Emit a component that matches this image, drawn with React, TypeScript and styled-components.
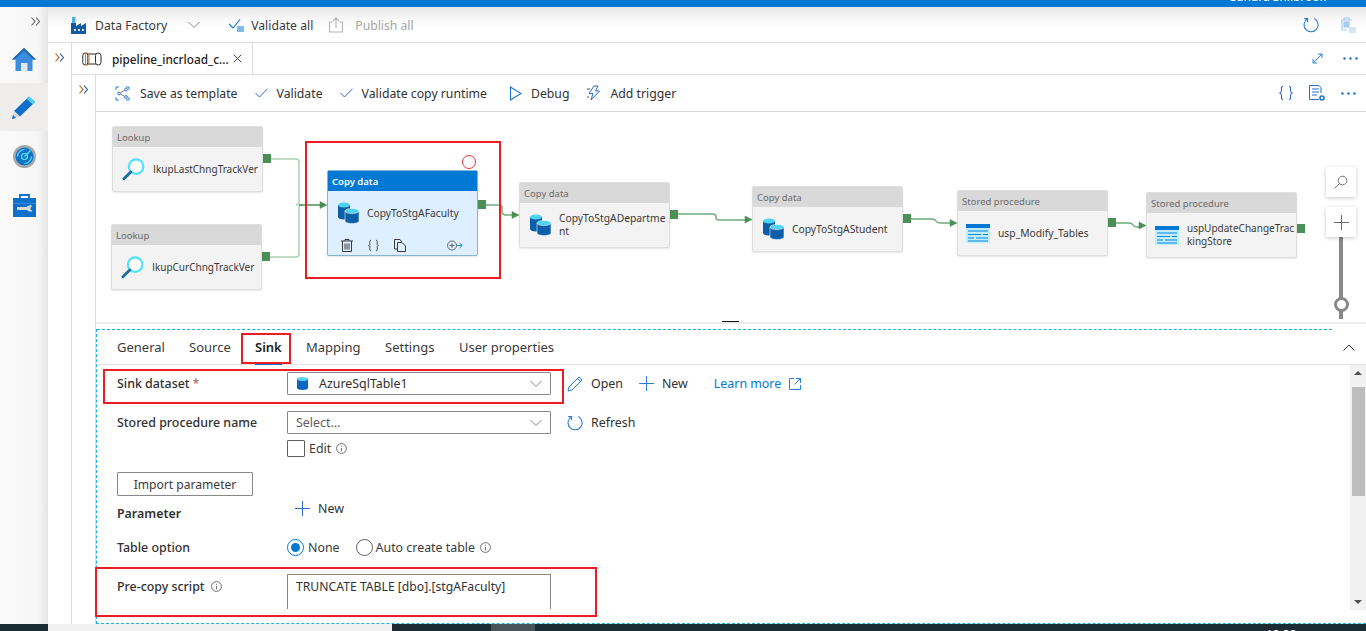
import React from 'react';
import styled, { createGlobalStyle } from 'styled-components';

const Global = createGlobalStyle`
  html, body { margin: 0; padding: 0; background: #fff; }
  body { font-family: "Noto Sans", "Open Sans", sans-serif; color: #323130; overflow: hidden; }
  * { box-sizing: border-box; }
`;

const Page = styled.div`
  width: 1366px; height: 631px; display: flex; flex-direction: column; overflow: hidden; position: relative;
`;
const TopBar = styled.div`
  height: 7px; flex: none; background: #0078d4; display: flex; justify-content: flex-end; overflow: hidden; padding-right: 40px;
`;
const Account = styled.span`
  color: #fff; font-size: 12px; line-height: 12px; margin-top: -9px;
`;
const Main = styled.div`
  flex: 1; min-height: 0; display: flex;
`;
const Rail = styled.nav`
  width: 48px; flex: none; display: flex; flex-direction: column; align-items: stretch;
  background: linear-gradient(90deg, #fafafa 0, #f6f6f6 80%, #e4e4e4 100%);
`;
const RailExpand = styled.div`
  height: 29px; display: flex; justify-content: flex-end; align-items: center; padding: 0 7px 0 0;
`;
const RailItem = styled.div<{ $active?: boolean; $h: number }>`
  height: ${p => p.$h}px; display: flex; align-items: center; justify-content: center;
  background: ${p => (p.$active ? '#eeedeb' : 'transparent')};
`;
const Content = styled.div`
  flex: 1; min-width: 0; display: flex; flex-direction: column;
`;
const FactoryBar = styled.header`
  height: 36px; flex: none; display: flex; align-items: center; padding: 1px 10px 0 23px;
  border-bottom: 1px solid #dcdcdc; font-size: 12.2px;
  background: linear-gradient(180deg, #e6e6e6 0, #f8f8f8 35%, #fff 60%);
`;
const BarLabel = styled.span<{ $off?: boolean; $ml?: number }>`
  display: flex; align-items: center;
  color: ${p => (p.$off ? '#a6a6a6' : '#3b3a39')}; margin-left: ${p => p.$ml ?? 0}px; white-space: nowrap;
`;
const Spacer = styled.div`flex: 1;`;
const Work = styled.div`
  flex: 1; min-height: 0; display: flex;
`;
const SideCol = styled.div`
  width: 24px; flex: none; border-right: 1px solid #dcdcdc; background: #fff; display: flex; justify-content: center;
  padding-top: 9px;
`;
const Column = styled.div`
  flex: 1; min-width: 0; display: flex; flex-direction: column;
`;
const TabStrip = styled.div`
  height: 32px; flex: none; display: flex; border-bottom: 1px solid #dcdcdc; align-items: stretch; padding-right: 8px;
`;
const DocTab = styled.div`
  width: 181px; border-right: 1px solid #dcdcdc; display: flex; align-items: center; padding-left: 10px;
  font-size: 11.8px; font-weight: 500; color: #252423;
`;
const TabName = styled.span`
  margin-left: 10px; width: 121px; white-space: nowrap;
`;
const TabTools = styled.div`
  margin-left: auto; display: flex; align-items: center; gap: 20px;
`;
const Toolbar = styled.div`
  height: 37px; flex: none; border-bottom: 1px solid #dcdcdc; display: flex; align-items: center; padding: 0 10px 0 19px;
  gap: 17px; font-size: 12.25px;
`;
const Tool = styled.div<{ $gap?: number; $ml?: number }>`
  display: flex; align-items: center; gap: ${p => p.$gap ?? 9}px; margin-left: ${p => p.$ml ?? 0}px; color: #323130; white-space: nowrap;
`;
const ToolIcons = styled.div`
  margin-left: auto; display: flex; align-items: center; gap: 15px;
`;
const Canvas = styled.div`
  height: 212px; flex: none; position: relative; border-bottom: 2px solid #ececec; overflow: hidden;
`;
const Wires = styled.svg`
  position: absolute; left: 0; top: 0; pointer-events: none;
`;
const Node = styled.div<{ $x: number; $y: number; $sel?: boolean }>`
  position: absolute; left: ${p => p.$x}px; top: ${p => p.$y}px; width: 151px; height: ${p => (p.$sel ? 86 : 66)}px;
  border: 1px solid ${p => (p.$sel ? '#84b4d8' : '#dedede')}; border-radius: 2px;
  background: ${p => (p.$sel ? '#deefff' : '#f3f3f3')};
  box-shadow: 0 1px 2px rgba(0,0,0,.1);
`;
const NodeHead = styled.div<{ $sel?: boolean }>`
  height: 20px; padding-left: 4px; font-size: 9.5px; line-height: 21px;
  background: ${p => (p.$sel ? '#0078d4' : '#d9d9d9')}; color: ${p => (p.$sel ? '#fff' : '#6a6a6a')};
  font-weight: ${p => (p.$sel ? 600 : 400)};
`;
const NodeBody = styled.div<{ $pad: number }>`
  height: 44px; display: flex; align-items: center; padding-left: ${p => p.$pad}px; gap: 8px;
`;
const NodeText = styled.div<{ $w: number; $fs?: number }>`
  width: ${p => p.$w}px; font-size: ${p => p.$fs ?? 10.3}px; line-height: 13px; color: #3b3a39; word-break: break-all;
`;
const Port = styled.div<{ $x: number; $y: number }>`
  position: absolute; left: ${p => p.$x}px; top: ${p => p.$y}px; width: 8px; height: 9px; background: #4b8f56;
`;
const NodeActions = styled.div`
  display: flex; align-items: center; height: 22px; padding-left: 13px; gap: 14px; margin-top: -1px;
`;
const RedRing = styled.div`
  position: absolute; left: 366px; top: 43px; width: 14px; height: 14px; border: 1px solid #e8333a; border-radius: 50%; background: #fff;
`;
const ZoomButton = styled.div<{ $y: number }>`
  position: absolute; left: 1230px; top: ${p => p.$y}px; width: 30px; height: 30px; background: #fff;
  box-shadow: 0 1px 4px rgba(0,0,0,.22); display: flex; align-items: center; justify-content: center;
`;
const ZoomTrack = styled.div`
  position: absolute; left: 1243px; top: 125px; width: 4px; height: 82px; background: #888;
`;
const ZoomKnob = styled.div`
  position: absolute; left: 1238px; top: 185px; width: 15px; height: 15px; border-radius: 50%; background: #fff; border: 3px solid #888;
`;
const Handle = styled.div`
  position: absolute; left: 626px; bottom: -1px; width: 17px; height: 2px; background: #111;
`;
const Props = styled.section`
  flex: 1; min-height: 0; margin-top: 5px; position: relative; display: flex; flex-direction: column;
  border-left: 1px dashed #12b4de; border-bottom: 1px dashed #12b4de;
`;
const DashTop = styled.div`
  height: 0; flex: none; border-top: 1px dashed #12b4de; margin-right: 34px;
`;
const PropTabs = styled.div`
  height: 35px; flex: none; display: flex; align-items: center; padding-left: 20px; border-bottom: 1px solid #e1e1e1; font-size: 13px; position: relative;
`;
const PropTab = styled.div<{ $active?: boolean; $w: number }>`
  width: ${p => p.$w}px; white-space: nowrap; color: ${p => (p.$active ? '#201f1e' : '#3b3a39')};
  font-weight: ${p => (p.$active ? 600 : 400)}; position: relative; line-height: 34px; height: 34px;
  ${p => p.$active ? `&::after { content: ""; position: absolute; left: 0; bottom: -1px; width: 27px; height: 2px; background: #0078d4; }` : ''}
`;
const Collapse = styled.div`
  margin-left: auto; width: 34px; display: flex; justify-content: center;
`;
const PropBody = styled.div`
  flex: 1; min-height: 0; display: flex; overflow: hidden;
`;
const Form = styled.div`
  flex: 1; min-width: 0; padding: 7px 0 0 20px; font-size: 12.4px; display: flex; flex-direction: column;
`;
const Row = styled.div<{ $h: number; $mb?: number }>`
  display: flex; align-items: center; height: ${p => p.$h}px; margin-bottom: ${p => p.$mb ?? 0}px; flex: none;
`;
const Label = styled.div<{ $strong?: boolean }>`
  width: 170px; flex: none; display: flex; align-items: center; gap: 6px; color: #323130; white-space: nowrap;
  font-weight: ${p => (p.$strong ? 600 : 500)};
`;
const Star = styled.span`color: #a86a6d; margin-left: -3px;`;
const Select = styled.div`
  width: 264px; height: 23px; flex: none; border: 1px solid #8a8886; border-radius: 1px; display: flex; align-items: center; padding: 0 8px 0 9px; gap: 11px; color: #323130;
`;
const Placeholder = styled.span`color: #605e5c; margin-left: -1px;`;
const Chevron = styled.span`margin-left: auto; display: flex;`;
const Action = styled.div<{ $ml: number; $link?: boolean; $raise?: number }>`
  margin-left: ${p => p.$ml}px; margin-bottom: ${p => p.$raise ?? 0}px; display: flex; align-items: center; gap: 8px; white-space: nowrap; color: ${p => (p.$link ? '#0078d4' : '#323130')};
`;
const Indent = styled.div`
  width: 170px; flex: none;
`;
const Check = styled.div`
  width: 18px; height: 17px; border: 1px solid #605e5c; border-radius: 1px; flex: none;
`;
const Inline = styled.span<{ $ml: number }>`
  margin-left: ${p => p.$ml}px; color: #3b3a39; white-space: nowrap; display: inline-flex; align-items: center; gap: 5px;
`;
const Button = styled.div`
  width: 136px; height: 24px; border: 1px solid #8a8886; border-radius: 1px; display: flex; align-items: center; justify-content: center; color: #3b3a39; font-size: 12.1px;
`;
const Radio = styled.div<{ $on?: boolean; $ml?: number }>`
  width: 17px; height: 17px; border-radius: 50%; flex: none; margin-left: ${p => p.$ml ?? 0}px; position: relative;
  border: 1px solid ${p => (p.$on ? '#0078d4' : '#605e5c')};
  ${p => p.$on ? `&::after { content: ""; position: absolute; left: 3px; top: 3px; width: 9px; height: 9px; border-radius: 50%; background: #0078d4; }` : ''}
`;
const ScriptRow = styled.div`
  display: flex; height: 35px; flex: none;
`;
const ScriptLabel = styled(Label)`
  height: 24px;
`;
const ScriptBox = styled.div`
  width: 264px; height: 35px; border: 1px solid #8a8886; border-bottom: none; padding: 3px 8px; line-height: 18px; color: #323130; white-space: nowrap; border-radius: 1px 1px 0 0; font-size: 12.2px;
`;
const Scrollbar = styled.div`
  width: 16px; height: 245px; flex: none; background: #f1f1f1; display: flex; flex-direction: column; align-items: center; justify-content: space-between; position: relative; padding: 6px 0;
`;
const Thumb = styled.div`
  position: absolute; left: 2px; top: 22px; width: 13px; height: 109px; background: #bdbdbd;
`;
const Footer = styled.div`
  height: 7px; flex: none; background: #1b2b33; position: relative; overflow: hidden;
`;
const FootLight = styled.div`
  position: absolute; left: 48px; top: 0; width: 344px; height: 7px; background: #f0f0f0;
`;
const FootPatch = styled.div`
  position: absolute; left: 491px; top: 0; width: 44px; height: 7px; background: #47555a;
`;
const FootClock = styled.span`
  position: absolute; left: 1266px; top: 5px; color: #fff; font-size: 12px; line-height: 12px;
`;
const Annot = styled.div<{ $x: number; $y: number; $w: number; $h: number }>`
  position: absolute; left: ${p => p.$x}px; top: ${p => p.$y}px; width: ${p => p.$w}px; height: ${p => p.$h}px;
  border: 2px solid #ed1c24; pointer-events: none;
`;

type S = { c?: string; s?: number };
const Dbl = ({ c = '#605e5c', s = 11 }: S) => (
  <svg width={s} height={s} viewBox="0 0 11 11" fill="none" stroke={c} strokeWidth="1.1"><path d="M1.5 1.5 5 5.5l-3.5 4M6 1.5l3.5 4-3.5 4" /></svg>
);
const DblBlue = () => (
  <svg width="11" height="11" viewBox="0 0 11 11" fill="none" strokeWidth="1.1"><path d="M1.5 1.5 5 5.5l-3.5 4" stroke="#c05a20" /><path d="M6 1.5l3.5 4-3.5 4" stroke="#1e4fa8" /></svg>
);
const Home = () => (
  <svg width="26" height="25" viewBox="0 0 26 25"><path d="M13 1 1 12.5h3.5V24h17V12.5H25z" fill="#3b8de0" /><path d="M13 1 1 12.5h2.6L13 3.7l9.4 8.8H25z" fill="#1a67b5" /><rect x="10" y="16" width="6.5" height="8" fill="#e6e6e6" /></svg>
);
const Pencil = () => (
  <svg width="26" height="26" viewBox="0 0 26 26"><path d="M18 2.5 24 8 9 22.5l-6-5.5z" fill="#0f6fcb" /><path d="M18 2.5 24 8l-2.4 2.3-6-5.5z" fill="#50d0f0" /><path d="M3 17l6 5.5-8 2.5z" fill="#d9d9d9" /><path d="M1 25l1-4 3 3z" fill="#0f6fcb" /></svg>
);
const Radar = () => (
  <svg width="25" height="25" viewBox="0 0 25 25" fill="none"><circle cx="12.5" cy="12.5" r="11.5" fill="#a9a9a9" /><circle cx="12.5" cy="12.5" r="9" fill="#0d74c8" /><path d="M5.5 12.5a7 7 0 0 1 7-7M12.5 19.5a7 7 0 0 0 7-7" stroke="#5fe0f5" strokeWidth="1.2" /><circle cx="12.5" cy="12.5" r="3" stroke="#5fe0f5" strokeWidth="1.2" /><path d="M12.5 12.5l6-6" stroke="#5fe0f5" strokeWidth="1.2" /></svg>
);
const Toolbox = () => (
  <svg width="25" height="25" viewBox="0 0 25 25"><path d="M8 5V2h9v3" fill="none" stroke="#0f6fcb" strokeWidth="1.8" /><rect x="1" y="5" width="23" height="19" fill="#0f6fcb" /><rect x="1" y="10" width="23" height="1" fill="#2c8ce0" /><path d="M5 14h10v3H5z" fill="#d8d8d8" /><path d="M15 13.5c2-1.5 4-1.5 5.5-.5l-2 1.4v2l2 1.6c-2 1-4 .6-5.5-1z" fill="#d8d8d8" /></svg>
);
const Factory = () => (
  <svg width="16" height="18" viewBox="0 0 16 18"><rect x="1" y="1" width="3.5" height="8" fill="#50b0e0" /><path d="M0 7h5v3l5-3v3l5-3v11H0z" fill="#155a9c" /><path d="M3 13h2v2H3zm4 0h2v2H7zm4 0h2v2h-2z" fill="#cfe6f8" /></svg>
);
const Down = ({ c = '#8a8886', w = 12 }: { c?: string; w?: number }) => (
  <svg width={w} height="8" viewBox="0 0 12 8" fill="none" stroke={c} strokeWidth="1"><path d="M.5 1 6 6.5 11.5 1" /></svg>
);
const ValidateAll = () => (
  <svg width="15" height="14" viewBox="0 0 15 14" fill="none" stroke="#0078d4" strokeWidth="1.1"><path d="M0 6l4 4 7-8.5" /><path d="M8 9h7M8 11h7M8 13h7" /></svg>
);
const Publish = () => (
  <svg width="14" height="16" viewBox="0 0 14 16" fill="none" stroke="#b5b5b5" strokeWidth="1.1"><path d="M3.5 5H.5v10h13V5h-3M7 11V1M4 3.8 7 1l3 2.8" /></svg>
);
const Refresh = ({ s = 16 }: { s?: number }) => (
  <svg width={s} height={s} viewBox="0 0 16 16" fill="none" stroke="#2b7cd3" strokeWidth="1.1"><path d="M4.5 1.800a7 7 0 1 0 6.800-.2" /><path d="M4.600 5V1.600H1.200" /></svg>
);
const Discard = () => (
  <svg width="16" height="16" viewBox="0 0 16 16" fill="none" stroke="#a5cdef" strokeWidth="1.2"><path d="M1 3h11M4 3V1h5v2M2 3v10h5" /><rect x="4" y="5" width="5" height="5" fill="#a5cdef" /><path d="M9 11h7M9 13h7M9 15h7" /></svg>
);
const PipeIcon = () => (
  <svg width="20" height="14" viewBox="0 0 20 14" fill="none" stroke="#2a2a2a" strokeWidth="1"><rect x=".8" y="1" width="5" height="12" rx="2.5" /><rect x="13.5" y="1" width="5.5" height="12" rx="2.7" /><path d="M5 2h9M5 12h9" /><rect x="3.5" y="1" width="3.5" height="12" rx="1.7" stroke="#c77a2a" /></svg>
);
const Close = () => (
  <svg width="9" height="9" viewBox="0 0 9 9" stroke="#4a4a4a" strokeWidth="1"><path d="M.7.7l7.6 7.6M8.3.7.7 8.3" /></svg>
);
const Expand = () => (
  <svg width="11" height="11" viewBox="0 0 11 11" fill="none" stroke="#2b7cd3" strokeWidth="1"><path d="M1 10 10 1M6 1h4v4M1 6v4h4" /></svg>
);
const Dots = () => (
  <svg width="15" height="3" viewBox="0 0 15 3" fill="#1a6fc4"><circle cx="1.5" cy="1.5" r="1.2" /><circle cx="7.5" cy="1.5" r="1.2" /><circle cx="13.5" cy="1.5" r="1.2" /></svg>
);
const Template = () => (
  <svg width="15" height="15" viewBox="0 0 15 15" fill="none" stroke="#2b7cd3" strokeWidth="1"><path d="M1 4V1h3M11 1h3v3M14 11v3h-3M4 14H1v-3" /><circle cx="4" cy="7.5" r="1.4" /><circle cx="11" cy="3.5" r="1.4" /><circle cx="11" cy="11" r="1.4" /><path d="M5.3 7l4.5-3M5.3 8l4.5 2.5" stroke="#777" /></svg>
);
const Tick = () => (
  <svg width="13" height="10" viewBox="0 0 13 10" fill="none" stroke="#2b6cc4" strokeWidth="1"><path d="M.5 5l4 4L12.5.7" /></svg>
);
const Debug = () => (
  <svg width="13" height="15" viewBox="0 0 13 15" fill="none" stroke="#1a75d0" strokeWidth="1.1"><path d="M1.5 1v13l10.5-6.5z" /></svg>
);
const Trigger = () => (
  <svg width="15" height="16" viewBox="0 0 15 16" fill="none" stroke="#2b6cc4" strokeWidth="1"><path d="M7 1 2 8.500h4L4 15l8.500-9H8.500L11 1z" /><path d="M0 4h3M0 12h2" stroke="#555" /></svg>
);
const Braces = ({ c = '#2b6cc4', s = 16 }: S) => (
  <svg width={s} height={s} viewBox="0 0 16 16" fill="none" stroke={c} strokeWidth="1.1"><path d="M5 1.500C3 1.500 3.500 3 3.500 5S3.500 7.500 2 8c1.500.5 1.500 1 1.500 3s-.5 3.500 1.500 3.500M11 1.500c2 0 1.500 1.500 1.500 3.500s0 2.500 1.500 3c-1.500.5-1.500 1-1.500 3s.5 3.500-1.500 3.500" /></svg>
);
const DocGear = () => (
  <svg width="17" height="17" viewBox="0 0 17 17" fill="none" stroke="#2b6cc4" strokeWidth="1"><path d="M10 14.500H.5V.5H10l2 2V8" /><path d="M3 4h7M3 7h7M3 10h5" /><circle cx="13" cy="13" r="2" strokeWidth="1.600" stroke="#1a75d0" /></svg>
);
const Search = () => (
  <svg width="14" height="14" viewBox="0 0 14 14" fill="none" stroke="#777" strokeWidth="1"><circle cx="8.500" cy="5.500" r="4.300" /><path d="M5.500 8.500.7 13.300" /></svg>
);
const Plus = ({ c = '#6a6a6a', s = 15 }: S) => (
  <svg width={s} height={s} viewBox="0 0 15 15" stroke={c} strokeWidth="1"><path d="M7.500 0v15M0 7.500h15" /></svg>
);
const Lookup = () => (
  <svg width="24" height="25" viewBox="0 0 24 25" fill="none"><circle cx="14.500" cy="9.500" r="7.500" stroke="#50e0ff" strokeWidth="2.200" fill="#fff" /><path d="M9 15 2 22" stroke="#1c6f9e" strokeWidth="3" strokeLinecap="round" /></svg>
);
const Db = () => (
  <svg width="21" height="22" viewBox="0 0 21 22"><path d="M0 3v12c0 1.500 2.500 2.500 6 2.500s6-1 6-2.500V3z" fill="#0d5ea8" /><ellipse cx="6" cy="3" rx="6" ry="2.600" fill="#4fd4f0" /><path d="M7 9v10c0 1.500 3 2.500 7 2.500s7-1 7-2.500V9z" fill="#0d5ea8" stroke="#deefff" strokeWidth=".6" /><ellipse cx="14" cy="9" rx="7" ry="2.600" fill="#4fd4f0" stroke="#fff" strokeWidth=".5" /></svg>
);
const Proc = () => (
  <svg width="24" height="19" viewBox="0 0 24 19"><rect width="24" height="19" fill="#bdeeff" /><rect width="24" height="4" fill="#0078d4" /><path d="M2 7h20M2 10.500h13M17 10.500h5M2 14h6M10 14h12M2 17h20" stroke="#0f82dc" strokeWidth="1.200" /></svg>
);
const Trash = () => (
  <svg width="12" height="13" viewBox="0 0 12 13" fill="none" stroke="#3b3a39" strokeWidth="1"><path d="M0 2h12M4 2V.5h4V2M1.500 2v10.500h9V2M4 4.500v6M6 4.500v6M8 4.500v6" /></svg>
);
const Copy = () => (
  <svg width="12" height="13" viewBox="0 0 12 13" fill="none" stroke="#3b3a39" strokeWidth="1"><path d="M3 10H.5V.5H6L8 3" /><path d="M3.500 3.500H8l3.500 3.500v5.500h-8z" /></svg>
);
const AddFlow = () => (
  <svg width="16" height="11" viewBox="0 0 16 11" fill="none"><circle cx="5" cy="5.500" r="4.500" stroke="#666" /><path d="M5 3v5M2.500 5.500h5" stroke="#666" /><path d="M9.500 5.500H15M12.500 3l2.700 2.500-2.700 2.500" stroke="#1a8fd0" /></svg>
);
const Edit = () => (
  <svg width="16" height="16" viewBox="0 0 16 16" fill="none" stroke="#2b7cd3" strokeWidth="1"><path d="M12 1l3 3-10 10-4 1 1-4zM10.500 2.500l3 3" /></svg>
);
const Info = () => (
  <svg width="11" height="11" viewBox="0 0 11 11" fill="none" stroke="#605e5c" strokeWidth=".9"><circle cx="5.500" cy="5.500" r="4.900" /><path d="M5.500 5v3.300M5.500 2.800v1" /></svg>
);
const External = () => (
  <svg width="12" height="12" viewBox="0 0 12 12" fill="none" stroke="#2b7cd3" strokeWidth="1"><path d="M5 .5H.5v11h11V7M7 .5h4.500V5M11.500.5 5.500 6.500" /></svg>
);
const SqlDs = () => (
  <svg width="11" height="13" viewBox="0 0 11 13"><path d="M0 2v9c0 1 2.500 2 5.500 2s5.500-1 5.500-2V2z" fill="#0a66c2" /><ellipse cx="5.500" cy="2" rx="5.500" ry="2" fill="#62d0f0" /></svg>
);
const Up = () => (
  <svg width="12" height="7" viewBox="0 0 12 7" fill="none" stroke="#333" strokeWidth="1"><path d="M.5 6.500 6 1l5.500 5.500" /></svg>
);
const Tri = ({ up }: { up?: boolean }) => (
  <svg width="8" height="4" viewBox="0 0 8 4" fill="#505050"><path d={up ? 'M0 4 4 0l4 4z' : 'M0 0h8L4 4z'} /></svg>
);

const nodes = [
  { x: 16, y: 14, type: 'Lookup', name: 'lkupLastChngTrackVer', icon: 'l', pad: 9, gap: 0, w: 112, fs: 10, px: 167, py: 42 },
  { x: 15, y: 112, type: 'Lookup', name: 'lkupCurChngTrackVer', icon: 'l', pad: 9, gap: 0, w: 112, fs: 10, px: 166, py: 140 },
  { x: 423, y: 70, type: 'Copy data', name: 'CopyToStgADepartment', icon: 'd', pad: 10, gap: 0, w: 110, fs: 10.3, px: 574, py: 98 },
  { x: 656, y: 74, type: 'Copy data', name: 'CopyToStgAStudent', icon: 'd', pad: 10, gap: 0, w: 110, fs: 10.3, px: 807, py: 102 },
  { x: 861, y: 78, type: 'Stored procedure', name: 'usp_Modify_Tables', icon: 'p', pad: 8, gap: 0, w: 108, fs: 10.3, px: 1012, py: 106 },
  { x: 1050, y: 80, type: 'Stored procedure', name: 'uspUpdateChangeTrackingStore', icon: 'p', pad: 8, gap: 0, w: 108, fs: 10, px: 1201, py: 112 },
];

export default function App() {
  return (
    <Page>
      <Global />
      <TopBar><Account>Sandra Shilbrook</Account></TopBar>
      <Main>
        <Rail>
          <RailExpand><Dbl /></RailExpand>
          <RailItem $h={47}><Home /></RailItem>
          <RailItem $h={48} $active><Pencil /></RailItem>
          <RailItem $h={50}><Radar /></RailItem>
          <RailItem $h={48}><Toolbox /></RailItem>
        </Rail>
        <Content>
          <FactoryBar>
            <Factory />
            <BarLabel $ml={8}>Data Factory</BarLabel>
            <BarLabel $ml={21}><Down /></BarLabel>
            <BarLabel $ml={29}><ValidateAll /></BarLabel>
            <BarLabel $ml={7}>Validate all</BarLabel>
            <BarLabel $ml={16}><Publish /></BarLabel>
            <BarLabel $off $ml={12}>Publish all</BarLabel>
            <Spacer />
            <Refresh />
            <BarLabel $ml={21}><Discard /></BarLabel>
          </FactoryBar>
          <Work>
            <SideCol><DblBlue /></SideCol>
            <Column>
              <TabStrip>
                <DocTab>
                  <PipeIcon />
                  <TabName>pipeline_incrload_c...</TabName>
                  <Close />
                </DocTab>
                <TabTools><Expand /><Dots /></TabTools>
              </TabStrip>
              <Work>
                <SideCol><DblBlue /></SideCol>
                <Column>
                  <Toolbar>
                    <Tool $gap={10}><Template />Save as template</Tool>
                    <Tool><Tick />Validate</Tool>
                    <Tool><Tick />Validate copy runtime</Tool>
                    <Tool $ml={5}><Debug />Debug</Tool>
                    <Tool $ml={1} $gap={8}><Trigger />Add trigger</Tool>
                    <ToolIcons><Braces /><DocGear /><Dots /></ToolIcons>
                  </Toolbar>
                  <Canvas>
                    <Wires width="1270" height="212" viewBox="24 0 1270 212" fill="none" strokeWidth="1.5">
                      <path d="M198 47h26q3 0 3 3v40q0 3-3 3" stroke="#a9cfb3" />
                      <path d="M197 145h27q3 0 3-3V96q0-3 3-3" stroke="#a9cfb3" />
                      <path d="M227 93h22" stroke="#4b8f56" />
                      <path d="M413 93h15q2 0 2 3v4q0 2 3 3h8" stroke="#6fac7c" />
                      <path d="M605 102h36q3 0 3 3v1q0 2 3 2h27" stroke="#6fac7c" />
                      <path d="M838 107h22q3 0 4 2t4 2h14" stroke="#6fac7c" />
                      <path d="M1043 111h14q3 0 4 2t4 2h4" stroke="#6fac7c" />
                      <path d="M248 89.500l7 3.500-7 3.500z M440 99.500l7 3.500-7 3.500z M673 104l7 3.500-7 3.500z M878 107.500l7 3.500-7 3.500z M1067 110l7 3.500-7 3.500z" fill="#4b8f56" stroke="#4b8f56" strokeWidth=".5" />
                    </Wires>
                    {nodes.map(n => (
                      <React.Fragment key={n.name}>
                        <Node $x={n.x} $y={n.y}>
                          <NodeHead>{n.type}</NodeHead>
                          <NodeBody $pad={n.pad}>
                            {n.icon === 'l' ? <Lookup /> : n.icon === 'd' ? <Db /> : <Proc />}
                            <NodeText $w={n.w} $fs={n.fs}>{n.name}</NodeText>
                          </NodeBody>
                        </Node>
                        <Port $x={n.px} $y={n.py} />
                      </React.Fragment>
                    ))}
                    <Node $x={231} $y={58} $sel>
                      <NodeHead $sel>Copy data</NodeHead>
                      <NodeBody $pad={10}>
                        <Db />
                        <NodeText $w={100}>CopyToStgAFaculty</NodeText>
                      </NodeBody>
                      <NodeActions>
                        <Trash />
                        <Braces c="#3b3a39" s={13} />
                        <Copy />
                        <Spacer />
                        <AddFlow />
                        <span />
                      </NodeActions>
                    </Node>
                    <Port $x={382} $y={88} />
                    <RedRing />
                    <ZoomButton $y={55}><Search /></ZoomButton>
                    <ZoomTrack />
                    <ZoomButton $y={95}><Plus /></ZoomButton>
                    <ZoomKnob />
                    <Handle />
                  </Canvas>
                  <Props>
                    <DashTop />
                    <PropTabs>
                      <PropTab $w={72}>General</PropTab>
                      <PropTab $w={66}>Source</PropTab>
                      <PropTab $w={51} $active>Sink</PropTab>
                      <PropTab $w={79}>Mapping</PropTab>
                      <PropTab $w={74}>Settings</PropTab>
                      <PropTab $w={110}>User properties</PropTab>
                      <Collapse><Up /></Collapse>
                    </PropTabs>
                    <PropBody>
                      <Form>
                        <Row $h={23} $mb={16}>
                          <Label>Sink dataset <Star>*</Star></Label>
                          <Select><SqlDs /><span>AzureSqlTable1</span><Chevron><Down /></Chevron></Select>
                          <Action $ml={16}><Edit />Open</Action>
                          <Action $ml={16}><Plus c="#2b7cd3" />New</Action>
                          <Action $ml={26} $link>Learn more <External /></Action>
                        </Row>
                        <Row $h={23} $mb={6}>
                          <Label>Stored procedure name</Label>
                          <Select><Placeholder>Select...</Placeholder><Chevron><Down /></Chevron></Select>
                          <Action $ml={16}><Refresh />Refresh</Action>
                        </Row>
                        <Row $h={17} $mb={15}>
                          <Indent />
                          <Check />
                          <Inline $ml={4}>Edit <Info /></Inline>
                        </Row>
                        <Row $h={24} $mb={5}><Button>Import parameter</Button></Row>
                        <Row $h={24} $mb={11}>
                          <Label $strong>Parameter</Label>
                          <Action $ml={8} $raise={10}><Plus c="#2b6cc4" />New</Action>
                        </Row>
                        <Row $h={22} $mb={16}>
                          <Label>Table option</Label>
                          <Radio $on />
                          <Inline $ml={4}>None</Inline>
                          <Radio $ml={16} />
                          <Inline $ml={3}>Auto create table <Info /></Inline>
                        </Row>
                        <ScriptRow>
                          <ScriptLabel>Pre-copy script <Info /></ScriptLabel>
                          <ScriptBox>TRUNCATE TABLE [dbo].[stgAFaculty]</ScriptBox>
                        </ScriptRow>
                      </Form>
                      <Scrollbar>
                        <Thumb />
                        <Tri up />
                        <Tri />
                      </Scrollbar>
                    </PropBody>
                  </Props>
                </Column>
              </Work>
            </Column>
          </Work>
        </Content>
      </Main>
      <Footer>
        <FootLight />
        <FootPatch />
        <FootClock>12:32</FootClock>
      </Footer>
      <Annot $x={305} $y={141} $w={196} $h={138} />
      <Annot $x={241} $y={333} $w={50} $h={31} />
      <Annot $x={103} $y={369} $w={461} $h={35} />
      <Annot $x={95} $y={567} $w={502} $h={50} />
    </Page>
  );
}
